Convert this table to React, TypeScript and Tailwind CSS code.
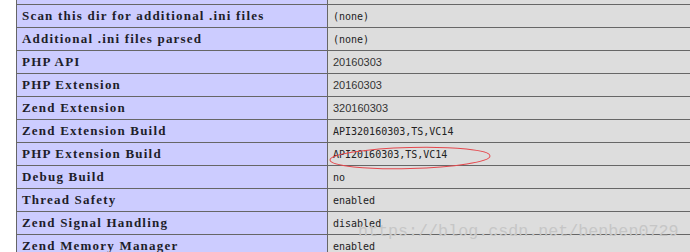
import React from "react";

type Row = {
  label: string;
  value: string;
  numeric?: boolean;
};

const rows: Row[] = [
  { label: "Scan this dir for additional .ini files", value: "(none)" },
  { label: "Additional .ini files parsed", value: "(none)" },
  { label: "PHP API", value: "20160303", numeric: true },
  { label: "PHP Extension", value: "20160303", numeric: true },
  { label: "Zend Extension", value: "320160303", numeric: true },
  { label: "Zend Extension Build", value: "API320160303,TS,VC14" },
  { label: "PHP Extension Build", value: "API20160303,TS,VC14" },
  { label: "Debug Build", value: "no" },
  { label: "Thread Safety", value: "enabled" },
  { label: "Zend Signal Handling", value: "disabled" },
  { label: "Zend Memory Manager", value: "enabled" },
];

const labelFont =
  "[font-family:'Liberation_Serif','Times_New_Roman',serif] font-bold text-[13px] tracking-[1.2px] text-[#1e1e2a]";
const textFont = "[font-family:'DejaVu_Sans_Mono',monospace] text-[10px] text-[#222]";
const numFont = "[font-family:'Liberation_Sans',Arial,sans-serif] text-[11px] text-[#333]";

const InfoRow = ({ row }: { row: Row }) => {
  return (
    <div className="flex h-[23px] border-b border-[#666]">
      <div className={`w-[311px] shrink-0 border-r border-[#666] bg-[#ccccff] flex items-center pl-[5px] ${labelFont}`}>
        {row.label}
      </div>
      <div className={`flex-1 bg-[#dddddd] flex items-center pl-[5px] ${row.numeric ? numFont : textFont}`}>
        {row.value}
      </div>
    </div>
  );
};

export default function App() {
  return (
    <div className="relative w-[690px] h-[252px] overflow-hidden bg-white">
      <div className="ml-[16px] w-[720px] border-l border-[#666]">
        {/* tail of the row above the visible part */}
        <div className="flex h-[5px] border-b border-[#666]">
          <div className="w-[311px] shrink-0 border-r border-[#666] bg-[#ccccff]" />
          <div className="flex-1 bg-[#dddddd]" />
        </div>
        {rows.map((row) => (
          <InfoRow key={row.label} row={row} />
        ))}
      </div>

      {/* hand-drawn marker round the extension build */}
      <svg
        className="absolute left-[326px] top-[144px] pointer-events-none"
        width="170"
        height="28"
        viewBox="0 0 170 28"
      >
        <ellipse
          cx="84"
          cy="14"
          rx="80"
          ry="10.5"
          fill="none"
          stroke="#e5484d"
          strokeWidth="1"
          transform="rotate(-1.5 84 14)"
        />
      </svg>

      <div className="absolute left-[358px] top-[224px] [font-family:'Liberation_Mono',monospace] text-[16.7px] leading-none text-[#c6c6c6] whitespace-nowrap pointer-events-none">
        https://blog.csdn.net/benben0729
      </div>
    </div>
  );
}
